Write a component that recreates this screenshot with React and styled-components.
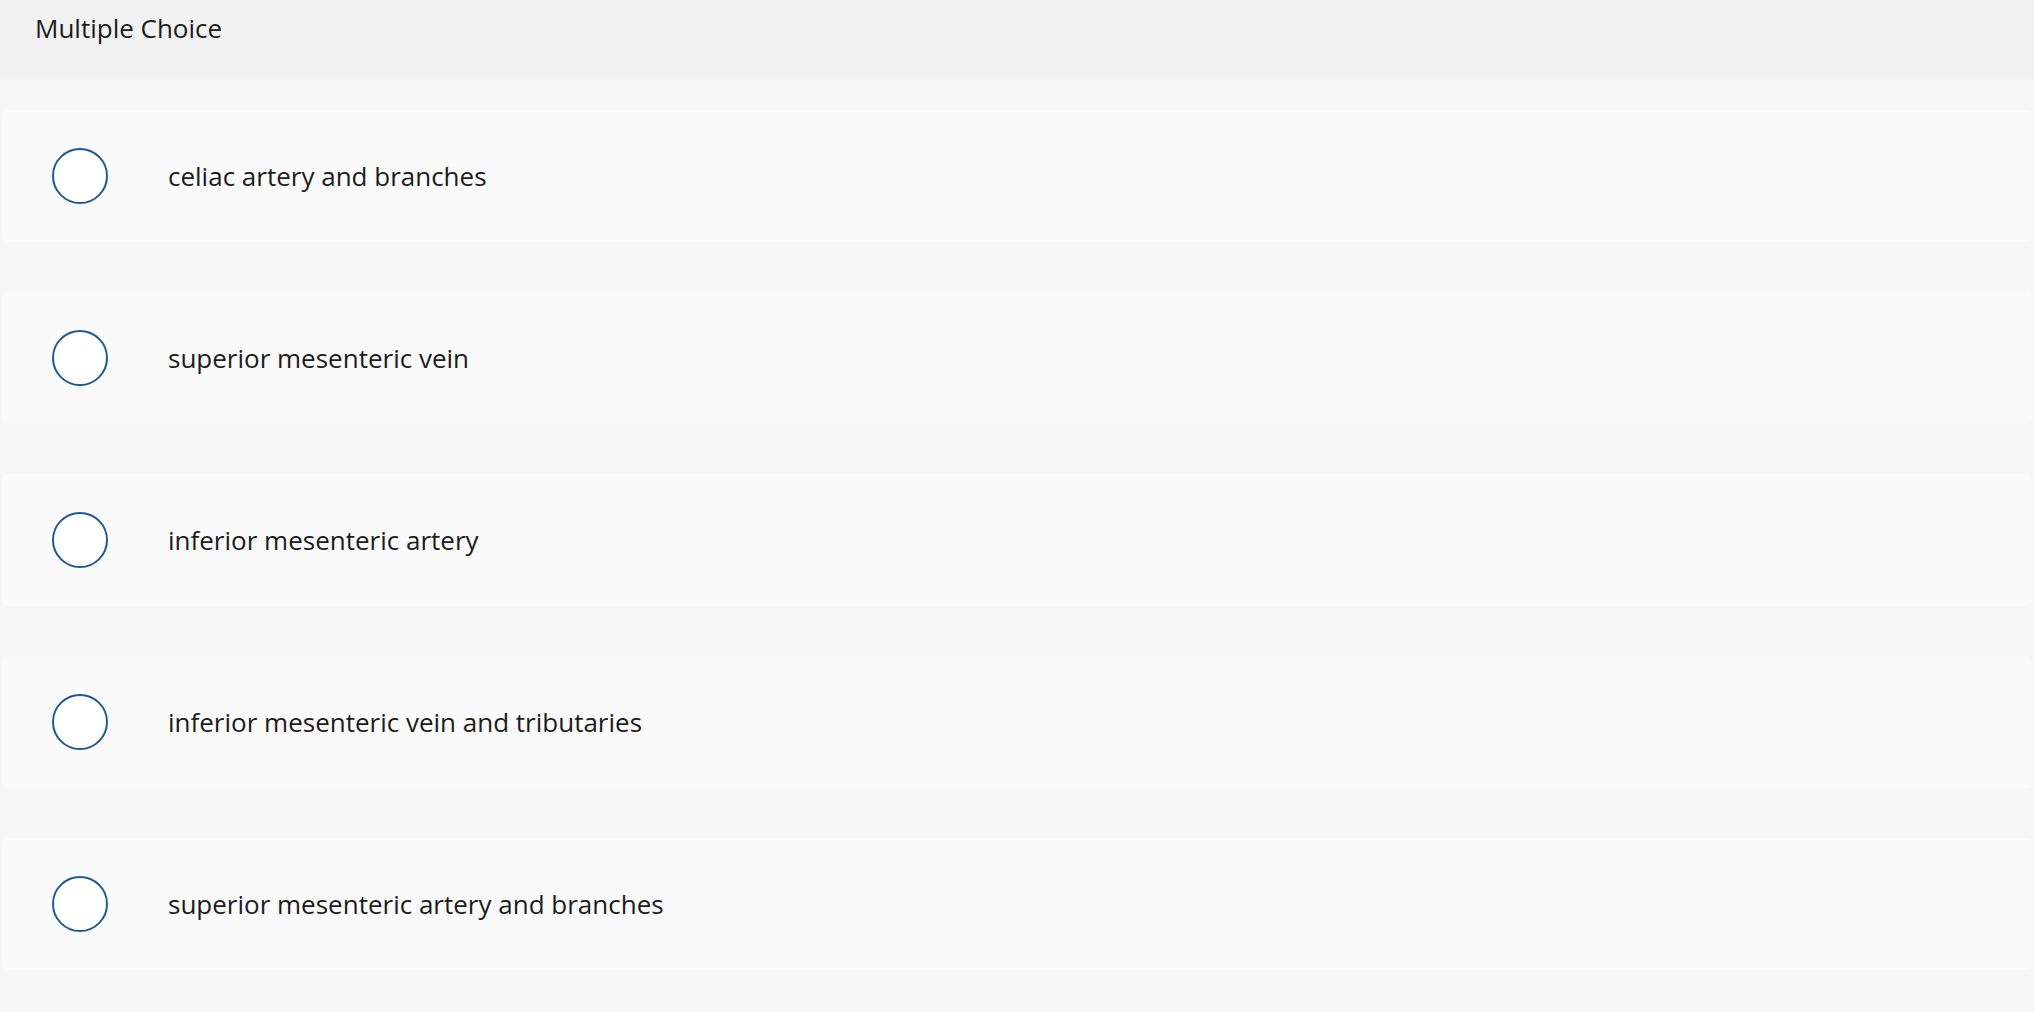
import React, { useState } from 'react';
import styled, { createGlobalStyle } from 'styled-components';

const choices = [
    'celiac artery and branches',
    'superior mesenteric vein',
    'inferior mesenteric artery',
    'inferior mesenteric vein and tributaries',
    'superior mesenteric artery and branches',
];

function App() {

    const [picked, setPicked] = useState(null);

    return (
        <>
            <GlobalStyle />
            <Page>
                <Header>
                    <Title>Multiple Choice</Title>
                </Header>
                <List>
                    {choices.map((choice, index) => (
                        <Choice key={index} onClick={() => setPicked(index)}>
                            <Radio checked={picked === index} />
                            <Label>{choice}</Label>
                        </Choice>
                    ))}
                </List>
            </Page>
        </>
    )
}

export default App;


const GlobalStyle = createGlobalStyle`

    body {
        margin: 0;
        background: #f6f6f6;
        font-family: "Open Sans", Lato, "Liberation Sans", sans-serif;
        font-variant-ligatures: none;
        color: #1c1c1c;
    }

`

const Page = styled.div`

    min-height: 1012px;
    background: #f6f6f6;

`

const Header = styled.div`

    height: 78px;
    background: #f2f2f2;
    display: flex;
    align-items: flex-start;
    padding-left: 35px;
    box-sizing: border-box;

`

const Title = styled.h1`

    margin: 0;
    padding-top: 12px;
    font-size: 26px;
    font-weight: 400;
    line-height: 32px;

`

const List = styled.div`

    display: flex;
    flex-direction: column;
    gap: 50px;
    padding: 32px 2px 0 2px;

`

const Choice = styled.div`

    height: 132px;
    background: #fafafa;
    border-radius: 5px;
    display: flex;
    align-items: center;
    padding-left: 50px;
    gap: 60px;
    cursor: pointer;

`

const Radio = styled.span`

    width: 56px;
    height: 56px;
    box-sizing: border-box;
    border-radius: 50%;
    border: 2px solid #215a92;
    background: ${props => props.checked ? 'radial-gradient(circle, #215a92 0 12px, #fff 13px)' : '#fff'};
    flex-shrink: 0;

`

const Label = styled.span`

    font-size: 26px;
    line-height: 32px;

`
